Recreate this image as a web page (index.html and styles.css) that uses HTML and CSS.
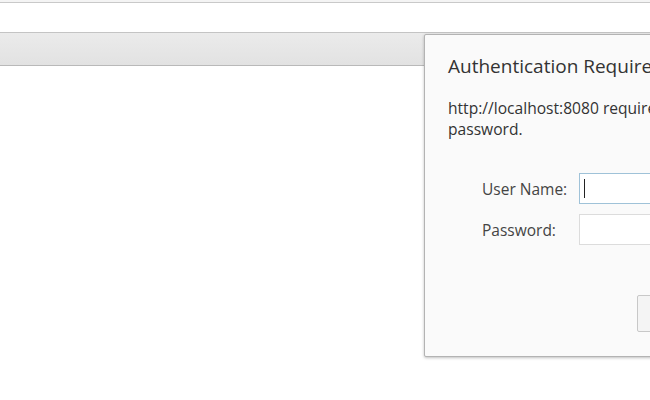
FILE: index.html
```html
<!DOCTYPE html>
<html>
<head>
<meta charset="utf-8">
<link rel="stylesheet" href="styles.css">
</head>
<body>
<div class="page">
  <div class="topline"></div>
  <div class="spacer"></div>
  <div class="toolbar"></div>
  <div class="content"></div>
</div>
<div class="dialog">
  <div class="title">Authentication Required</div>
  <div class="message">http://localhost:8080 requires a username and<br>password.</div>
  <div class="form">
    <div class="row">
      <label class="label">User Name:</label>
      <div class="input focused"><span class="caret"></span></div>
    </div>
    <div class="row">
      <label class="label">Password:</label>
      <div class="input"></div>
    </div>
  </div>
  <div class="buttons">
    <div class="button">Log In</div>
    <div class="button">Cancel</div>
  </div>
</div>
</body>
</html>
```
FILE: styles.css
```css
html, body {
  margin: 0;
  padding: 0;
  width: 650px;
  height: 400px;
  overflow: hidden;
  background: #ffffff;
  font-family: "Open Sans", "Noto Sans", sans-serif;
}
.page {
  display: flex;
  flex-direction: column;
}
.topline {
  height: 2px;
  background: #f4f4f4;
  border-bottom: 1px solid #c9c9c9;
}
.spacer {
  height: 29px;
  background: #ffffff;
}
.toolbar {
  height: 32px;
  border-top: 1px solid #c4c4c4;
  border-bottom: 1px solid #b9b9b9;
  background: linear-gradient(#ebebeb, #e2e2e2);
}
.content {
  flex: 1;
}
.dialog {
  position: absolute;
  left: 424px;
  top: 34px;
  width: 420px;
  height: 323px;
  box-sizing: border-box;
  background: #fafafa;
  border: 1px solid #b3b3b3;
  border-radius: 2px;
  box-shadow: 0 1px 3px rgba(0,0,0,0.25);
  padding: 17px 0 0 23px;
  color: #333333;
}
.title {
  font-size: 19px;
  line-height: 28px;
  color: #333;
  white-space: nowrap;
}
.message {
  margin-top: 18px;
  font-size: 15.6px;
  line-height: 21px;
  white-space: nowrap;
  color: #333;
}
.form {
  margin-top: 33px;
  display: flex;
  flex-direction: column;
  gap: 10px;
}
.row {
  display: flex;
  align-items: center;
}
.label {
  padding-left: 34px;
  box-sizing: border-box;
  width: 131px;
  font-size: 15.5px;
  color: #444;
}
.input {
  width: 200px;
  height: 31px;
  box-sizing: border-box;
  border: 1px solid #dcdcdc;
  background: #ffffff;
  display: flex;
  align-items: center;
  padding-left: 4px;
}
.input.focused {
  border-color: #9fc2d8;
}
.caret {
  width: 1px;
  height: 19px;
  background: #222;
}
.buttons {
  margin-top: 50px;
  display: flex;
  gap: 8px;
  padding-left: 189px;
}
.button {
  height: 37px;
  box-sizing: border-box;
  border: 1px solid #c8c8c8;
  border-radius: 2px;
  background: #f4f4f4;
  padding: 0 18px;
  display: flex;
  align-items: center;
  font-size: 14px;
  color: #333;
}
```
